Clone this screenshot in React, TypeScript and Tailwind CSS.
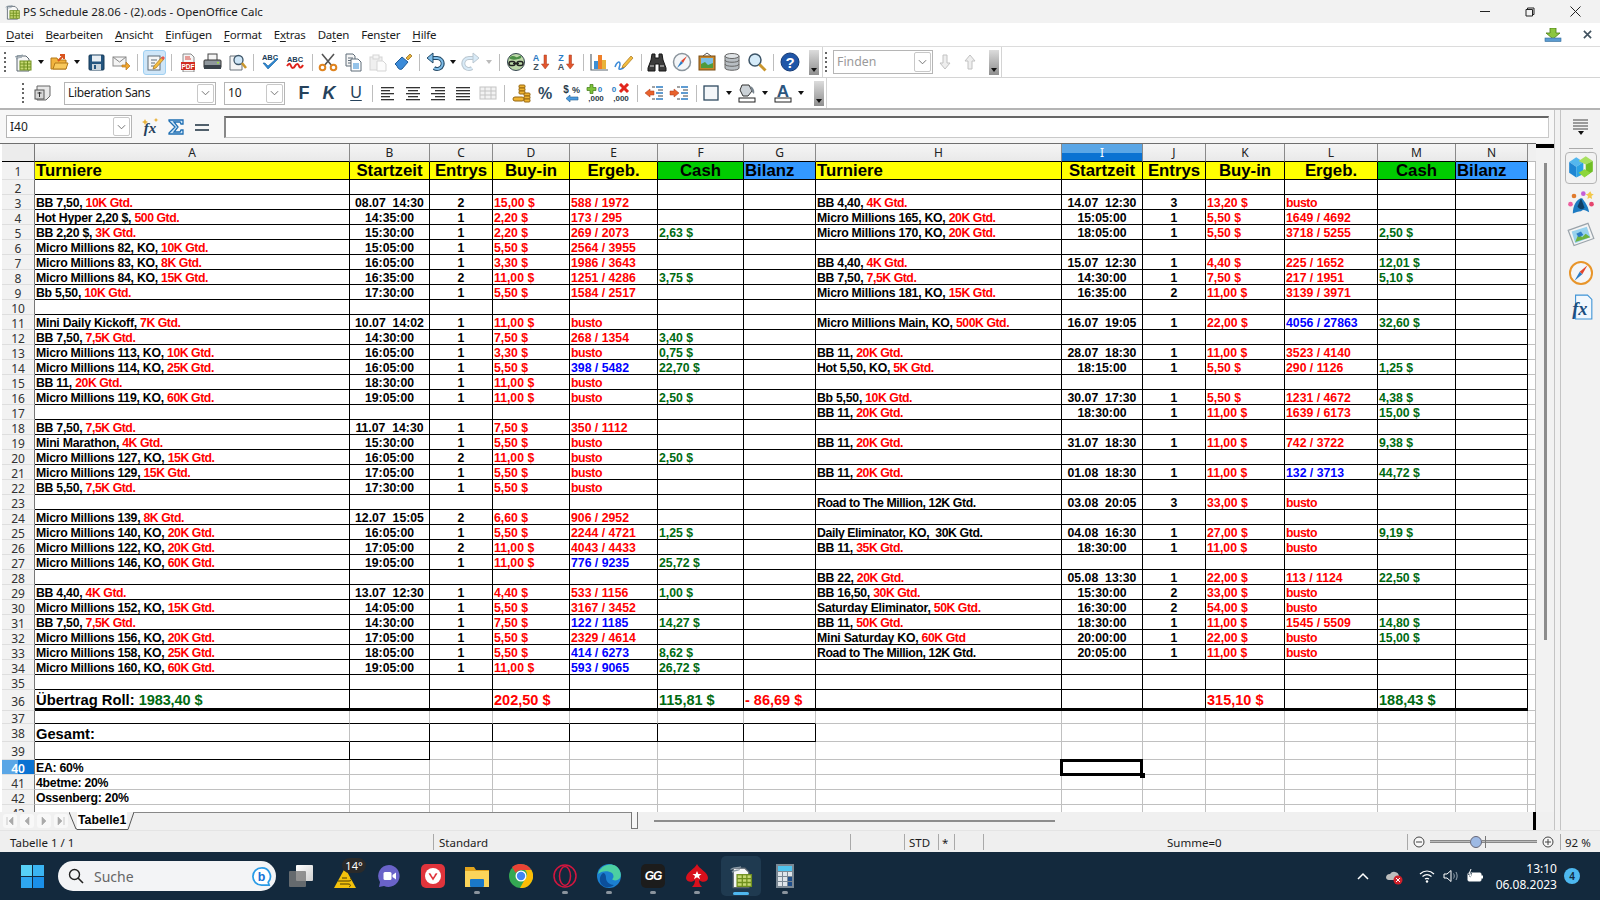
import React from "react";

type SP = { className?: string; children?: React.ReactNode };
const V = ({ className = "", children }: SP) => (
  <svg viewBox="0 0 20 20" className={`w-5 h-5 shrink-0 ${className}`}>{children}</svg>
);
const ff = "Liberation Sans, sans-serif";

const Dd = ({ m, gray }: { m: string; gray?: boolean }) => (
  <svg viewBox="0 0 6 4" className={`w-[6px] h-1 shrink-0 ${m}`}><path d="M0 0h6L3 4z" fill={gray ? "#bbb" : "#111"} /></svg>
);
const Sep = ({ m }: { m: string }) => <div className={`w-px h-[17px] bg-[#bdbdbd] shrink-0 ${m}`} />;
const Grip = ({ m }: { m: string }) => (
  <div className={`w-[2px] h-[20px] shrink-0 flex flex-col justify-between ${m}`}>
    {[0, 1, 2, 3, 4].map((i) => <div key={i} className="w-[2px] h-[2px] bg-[#666]" />)}
  </div>
);
const Overflow = ({ m }: { m: string }) => (
  <div className={`w-[10px] h-[25px] shrink-0 bg-gradient-to-b from-[#dcdcdc] to-[#8f8f8f] flex items-end justify-center pb-[3px] ${m}`}>
    <svg viewBox="0 0 6 4" className="w-[6px] h-1"><path d="M0 0h6L3 4z" fill="#111" /></svg>
  </div>
);
const Chev = () => (
  <svg viewBox="0 0 10 6" className="w-[9px] h-[6px]"><path d="M1 1l4 4 4-4" fill="none" stroke="#666" /></svg>
);
const Calc = ({ className = "" }: { className?: string }) => (
  <svg viewBox="0 0 20 20" className={className}>
    <path d="M4 4h9l3 3v12H4z" fill="#f7f7f7" stroke="#5b6670" />
    <rect x="7" y="9" width="11" height="9" fill="#c6d872" stroke="#6f8f1e" />
    <path d="M7 12h11M7 15h11M11 9v9M14.500 9v9" stroke="#6f8f1e" fill="none" />
    <path d="M2 5c3-2 5-1 8-2M3 7c3-2 4-1 6-2" stroke="#8a9aa5" fill="none" />
  </svg>
);
const IOpen = () => (
  <V className="ml-[5px]">
    <path d="M2 6h6l1 2h8v9H2z" fill="#f2b33d" stroke="#b37a1a" />
    <path d="M4 17l2-6h13l-2 6z" fill="#f8c95c" stroke="#b37a1a" />
    <path d="M9 9l6-6m-4 0h4v4" fill="none" stroke="#d9531e" strokeWidth="2" />
  </V>
);
const ISave = () => (
  <V className="ml-[6px]">
    <rect x="3" y="3" width="15" height="15" rx="1" fill="#24557f" stroke="#163a58" />
    <rect x="6" y="3.500" width="9" height="6" fill="#e8eef3" />
    <rect x="6" y="12" width="9" height="6" fill="#c9d4dc" />
    <rect x="8" y="13" width="2" height="4" fill="#24557f" />
  </V>
);
const IMail = () => (
  <V className="ml-[5px]">
    <rect x="2" y="5" width="13" height="9" fill="#f4f4f4" stroke="#8a8a8a" />
    <path d="M2 5l6.500 5L15 5" fill="none" stroke="#8a8a8a" />
    <path d="M11 13h4v-3l4 4-4 4v-3h-4z" fill="#efa52d" stroke="#b9751a" strokeWidth=".7" />
  </V>
);
const IEdit = () => (
  <div className="ml-[5px] w-[23px] h-[25px] shrink-0 flex items-center justify-center bg-[#cfe6f8] border border-[#9fd0f2] rounded-[3px]">
    <V>
      <rect x="3" y="4" width="12" height="14" fill="#f6f6f6" stroke="#5f6c78" />
      <path d="M6 8h6M6 11h4M6 14h3" stroke="#5f6c78" />
      <path d="M9 14l8-9 2 2-8 9-3 1z" fill="#f3bd3f" stroke="#a5731c" strokeWidth=".7" />
      <path d="M16 6l2-2 2 2-2 2z" fill="#e4574f" />
    </V>
  </div>
);
const IPdf = () => (
  <V className="ml-[6px]">
    <path d="M5 2h8l3 3v15H5z" fill="#f5f5f5" stroke="#8a8a8a" />
    <path d="M7 5h5M7 7h6" stroke="#d8453a" />
    <rect x="3" y="10" width="14" height="8" fill="#d02c23" />
    <text x="10" y="16.500" fontSize="6.500" fontWeight="700" fill="#fff" textAnchor="middle" fontFamily={ff}>PDF</text>
  </V>
);
const IPrint = () => (
  <V className="ml-[4px]">
    <rect x="6" y="2" width="9" height="7" fill="#f5f5f5" stroke="#444" />
    <rect x="2" y="8" width="17" height="8" rx="1" fill="#8f979d" stroke="#333" />
    <rect x="2" y="13" width="17" height="4" fill="#39424a" />
    <rect x="15" y="10" width="2" height="1.500" fill="#9adf3f" />
  </V>
);
const IPreview = () => (
  <V className="ml-[5px]">
    <path d="M3 4h9l3 3v11H3z" fill="#f5f5f5" stroke="#6a737b" />
    <circle cx="11.500" cy="8" r="4.500" fill="#cfe6f7" stroke="#3d5568" strokeWidth="1.300" />
    <path d="M15 11l4 5" stroke="#c9962d" strokeWidth="2.500" />
  </V>
);
const ISpell = () => (
  <V className="ml-[6px]">
    <text x="10" y="8" fontSize="7.500" fontWeight="700" fill="#24405a" textAnchor="middle" fontFamily={ff}>ABC</text>
    <path d="M3 11l5 6L18 7l-1-1-9 8-3-3z" fill="#2b87d3" stroke="#1a5f9c" strokeWidth=".6" />
  </V>
);
const IAuto = () => (
  <V className="ml-[5px]">
    <text x="10" y="10" fontSize="7.500" fontWeight="700" fill="#24405a" textAnchor="middle" fontFamily={ff}>ABC</text>
    <path d="M2 14c2-3 3-3 4 0s3 2 4 0 3-3 4 0 3 1 4-1" fill="none" stroke="#e0241b" strokeWidth="2" />
  </V>
);
const ICut = () => (
  <V className="ml-[5px]">
    <path d="M4 2l10 12M16 2L6 14" stroke="#555" strokeWidth="1.600" />
    <circle cx="4.500" cy="15.500" r="2.800" fill="none" stroke="#df8420" strokeWidth="2" />
    <circle cx="15.500" cy="15.500" r="2.800" fill="none" stroke="#df8420" strokeWidth="2" />
  </V>
);
const ICopy = () => (
  <V className="ml-[5px]">
    <path d="M3 2h7l2 2v10H3z" fill="#f5f5f5" stroke="#5f6c78" />
    <path d="M5 6h5M5 8.500h5M5 11h3" stroke="#5f6c78" />
    <path d="M8 7h7l3 3v9H8z" fill="#fff" stroke="#5f6c78" />
    <path d="M10 12h6M10 14h6M10 16h6" stroke="#2b87d3" />
  </V>
);
const IPaste = () => (
  <V className="ml-[5px] opacity-40">
    <rect x="2" y="5" width="12" height="13" fill="#d8d8d8" stroke="#999" />
    <rect x="5" y="3" width="6" height="4" fill="#e8e8e8" stroke="#999" />
    <path d="M9 9h6l3 3v7H9z" fill="#f8f8f8" stroke="#999" />
  </V>
);
const IBrush = () => (
  <V className="ml-[5px]">
    <path d="M13 6l4-4 2 2-4 4z" fill="#e9b23a" stroke="#8a6414" strokeWidth=".7" />
    <path d="M2 12l7-7 6 5-6 7c-2 1-3 0-4-1l-1-2z" fill="#3b8bd9" stroke="#1f5b97" />
  </V>
);
const IUndo = ({ gray, m }: { gray?: boolean; m: string }) => (
  <V className={`${m} ${gray ? "opacity-30 -scale-x-100" : ""}`}>
    <path d="M6 6h6a5.500 5.500 0 1 1-3 10" fill="none" stroke="#234a68" strokeWidth="4" />
    <path d="M6 6h6a5.500 5.500 0 1 1-3 10" fill="none" stroke="#7fbde8" strokeWidth="2" />
    <path d="M8 1L2 6l6 5z" fill="#7fbde8" stroke="#234a68" />
  </V>
);
const IGlobe = () => (
  <V className="ml-[6px]">
    <circle cx="10" cy="10" r="8.500" fill="#bcd8a8" stroke="#34454f" />
    <path d="M3 6c3-3 5-2 7-1s3-2 5-1c1 2-1 3-3 3-3 1-7 1-9-1z" fill="#4c8f46" />
    <rect x="3" y="9.500" width="6" height="4" rx="2" fill="none" stroke="#222" strokeWidth="1.500" />
    <rect x="11" y="9.500" width="6" height="4" rx="2" fill="none" stroke="#222" strokeWidth="1.500" />
    <path d="M7 11.500h6" stroke="#222" strokeWidth="1.500" />
  </V>
);
const ISort = ({ a, b }: { a: string; b: string }) => (
  <V className="ml-[5px]">
    <text x="5" y="9" fontSize="9" fontWeight="700" fill="#2b7cc4" textAnchor="middle" fontFamily={ff}>{a}</text>
    <text x="5" y="18" fontSize="9" fontWeight="700" fill="#44515c" textAnchor="middle" fontFamily={ff}>{b}</text>
    <path d="M13 3h2.500v9H18l-3.800 5-3.800-5H13z" fill="#e2552d" stroke="#a8381a" strokeWidth=".5" />
  </V>
);
const IChart = () => (
  <V className="ml-[5px]">
    <path d="M2 2v16h17" fill="none" stroke="#5a6670" strokeWidth="1.200" />
    <rect x="5" y="9" width="4" height="8" fill="#3d8fd6" />
    <rect x="9" y="3" width="4" height="14" fill="#ef7f28" />
    <rect x="13" y="8" width="4" height="9" fill="#e8b33a" />
  </V>
);
const IDraw = () => (
  <V className="ml-[5px]">
    <path d="M1 15c2-6 5-6 5-3s-3 6 1 5 3-3 5-5" fill="none" stroke="#3b8bd9" strokeWidth="1.500" />
    <path d="M9 13L17 4l2 2-8 9-3 1z" fill="#f3bd3f" stroke="#a5731c" strokeWidth=".7" />
  </V>
);
const IBinoc = () => (
  <V className="ml-[5px]">
    <path d="M5 2h3v4h4V2h3l1 6 3 8v3h-7v-7H8v7H1v-3l3-8z" fill="#3c3c3c" stroke="#151515" />
    <rect x="3" y="13" width="4" height="2" fill="#8a8a8a" />
    <rect x="13" y="13" width="4" height="2" fill="#8a8a8a" />
  </V>
);
const ICompass = ({ m, ring }: { m: string; ring: string }) => (
  <V className={m}>
    <circle cx="10" cy="10" r="8.500" fill="#f4f6f8" stroke={ring} strokeWidth="1.500" />
    <path d="M15 4l-6 5 2 2z" fill="#e2452d" />
    <path d="M5 16l4-7 2 2z" fill="#2b7cc4" />
  </V>
);
const IFrame = () => (
  <V className="ml-[5px]">
    <path d="M6 4l4-3 4 3" fill="none" stroke="#555" />
    <rect x="2" y="4" width="16" height="14" fill="#c8862a" stroke="#7b4c12" />
    <rect x="4" y="6" width="12" height="10" fill="#7cc0e8" />
    <path d="M4 16v-4l4-2 3 3 5-2v5z" fill="#4f9b3e" />
  </V>
);
const IDb = () => (
  <V className="ml-[5px]">
    <path d="M3 4v12c0 3 14 3 14 0V4" fill="#b8bec3" stroke="#666" />
    <ellipse cx="10" cy="4" rx="7" ry="2.500" fill="#dfe3e6" stroke="#666" />
    <path d="M3 8c0 3 14 3 14 0M3 12c0 3 14 3 14 0" fill="none" stroke="#666" />
  </V>
);
const IZoom = () => (
  <V className="ml-[5px]">
    <circle cx="8" cy="8" r="6" fill="#d5ebf9" stroke="#3d5568" strokeWidth="1.500" />
    <path d="M12.500 12.500l6 6" stroke="#c9962d" strokeWidth="3" />
  </V>
);
const IHelp = () => (
  <V className="ml-[6px]">
    <circle cx="10" cy="10" r="9" fill="#1f56a8" stroke="#143a75" />
    <text x="10" y="15.500" fontSize="15" fontWeight="700" fill="#fff" textAnchor="middle" fontFamily={ff}>?</text>
  </V>
);
const IStyles = () => (
  <V className="ml-[9px]">
    <path d="M4 3h13v10l-4 4H4z" fill="#e8e8e8" stroke="#666" />
    <rect x="2" y="7" width="9" height="9" fill="#d7d7d7" stroke="#555" />
    <path d="M6.500 9v5M4.500 10h4" stroke="#333" />
  </V>
);
const TxtBtn = ({ m, c, t }: { m: string; c: string; t: string }) => (
  <div className={`w-5 h-5 shrink-0 flex items-center justify-center font-['Liberation_Sans',sans-serif] text-[#26425c] ${c} ${m}`}>{t}</div>
);
const Align = ({ m, lines }: { m: string; lines: [number, number][] }) => (
  <V className={m}>
    {lines.map(([x, w], i) => <rect key={i} x={x} y={4 + i * 3} width={w} height="1.300" fill="#333" />)}
  </V>
);
const IMerge = () => (
  <V className="ml-[5px]">
    <rect x="2" y="4" width="16" height="12" fill="#f2f2f2" stroke="#c4c4c4" />
    <path d="M2 8h16M2 12h16M7 4v12M13 4v12" stroke="#c4c4c4" />
  </V>
);
const ICoins = () => (
  <V className="ml-[6px]">
    <rect x="8" y="2" width="6" height="3" rx="1" fill="#efb332" stroke="#96660f" />
    <rect x="8" y="5" width="6" height="3" rx="1" fill="#efb332" stroke="#96660f" />
    <rect x="8" y="8" width="6" height="3" rx="1" fill="#efb332" stroke="#96660f" />
    <rect x="13" y="10" width="6" height="3" rx="1" fill="#efb332" stroke="#96660f" />
    <rect x="13" y="13" width="6" height="3" rx="1" fill="#efb332" stroke="#96660f" />
    <rect x="13" y="16" width="6" height="3" rx="1" fill="#efb332" stroke="#96660f" />
    <rect x="2" y="14" width="11" height="4" rx="2" fill="#efb332" stroke="#96660f" />
  </V>
);
const IPct = () => (
  <V className="ml-[4px]">
    <text x="10" y="16" fontSize="16" fontWeight="700" fill="#2f4a60" textAnchor="middle" fontFamily={ff}>%</text>
  </V>
);
const IDollar = () => (
  <V className="ml-[6px]">
    <text x="5" y="10" fontSize="10" fontWeight="700" fill="#2a3b48" textAnchor="middle" fontFamily={ff}>$</text>
    <text x="15" y="10" fontSize="9" fontWeight="700" fill="#2a3b48" textAnchor="middle" fontFamily={ff}>%</text>
    <path d="M17 14H9v-2l-4 3.500L9 19v-2h8z" fill="#4c9be0" stroke="#24608f" strokeWidth=".6" />
  </V>
);
const INum = ({ add }: { add?: boolean }) => (
  <V className="ml-[5px]">
    {add ? <path d="M4 1.500h3v3h3v3H7v3H4v-3H1v-3h3z" fill="#7cc23a" stroke="#3f7a14" strokeWidth=".7" /> : <path d="M9 1l8 8m0-8l-8 8" stroke="#e2261d" strokeWidth="3" />}
    <text x={add ? "14" : "3"} y="9" fontSize="8" fontWeight="700" fill="#2b7cc4" textAnchor="middle" fontFamily={ff}>0</text>
    <text x="10" y="18" fontSize="8" fontWeight="700" fill="#2a3b48" textAnchor="middle" fontFamily={ff}>,000</text>
  </V>
);
const IIndent = ({ out }: { out?: boolean }) => (
  <V className={out ? "ml-[6px]" : "ml-[5px]"}>
    {out ? <path d="M1 10l5-4v2h4v4H6v2z" fill="#e8622c" stroke="#a8381a" strokeWidth=".5" /> : <path d="M10 10L5 6v2H1v4h4v2z" fill="#e8622c" stroke="#a8381a" strokeWidth=".5" />}
    <path d="M12 4h7M12 10h7M12 16h7" stroke="#2b7cc4" strokeWidth="1.500" />
    <path d="M8 4h3M8 16h3M14 7h5M14 13h5" stroke="#444" />
  </V>
);
const IBorder = () => (
  <V className="ml-[4px]">
    <rect x="3" y="3" width="14" height="14" fill="#f3f6f9" stroke="#2f4a60" strokeWidth="1.300" />
  </V>
);
const IFill = () => (
  <V className="ml-[5px]">
    <path d="M5 2l7 0 3 6-4 5H6L3 7z" fill="#ccd2d7" stroke="#333" />
    <path d="M13 3c3 1 5 4 4 8l-2-2z" fill="#7a868f" />
    <rect x="2" y="15" width="16" height="4" fill="#fff" stroke="#222" />
  </V>
);
const IFontColor = () => (
  <V className="ml-[5px]">
    <text x="10" y="13.500" fontSize="17" fontWeight="700" fill="#2b567f" textAnchor="middle" fontFamily={ff}>A</text>
    <rect x="2" y="15" width="16" height="4" fill="#fff" stroke="#222" />
  </V>
);
const IArrow = ({ up, m }: { up?: boolean; m: string }) => (
  <svg viewBox="0 0 16 16" className={`w-4 h-4 shrink-0 ${m} ${up ? "rotate-180" : ""}`}>
    <path d="M6 1h4v8h3l-5 6-5-6h3z" fill="#eee" stroke="#c2c2c2" />
  </svg>
);

const MenuItem = ({ a, u, b }: { a: string; u: string; b: string }) => (
  <span>{a}<span className="underline underline-offset-[2px]">{u}</span>{b}</span>
);

type R = [string, string, string, string, string, string, string];
const E: R = ["", "", "", "", "", "", ""];
const MM = "Micro Millions ";
const left: R[] = [
  ["BB 7,50, ", "10K Gtd.", "08.07  14:30", "2", "15,00 $", "588 / 1972", ""],
  ["Hot Hyper 2,20 $, ", "500 Gtd.", "14:35:00", "1", "2,20 $", "173 / 295", ""],
  ["BB 2,20 $, ", "3K Gtd.", "15:30:00", "1", "2,20 $", "269 / 2073", "2,63 $"],
  [MM + "82, KO, ", "10K Gtd.", "15:05:00", "1", "5,50 $", "2564 / 3955", ""],
  [MM + "83, KO, ", "8K Gtd.", "16:05:00", "1", "3,30 $", "1986 / 3643", ""],
  [MM + "84, KO, ", "15K Gtd.", "16:35:00", "2", "11,00 $", "1251 / 4286", "3,75 $"],
  ["Bb 5,50, ", "10K Gtd.", "17:30:00", "1", "5,50 $", "1584 / 2517", ""],
  E,
  ["Mini Daily Kickoff, ", "7K Gtd.", "10.07  14:02", "1", "11,00 $", "busto", ""],
  ["BB 7,50, ", "7,5K Gtd.", "14:30:00", "1", "7,50 $", "268 / 1354", "3,40 $"],
  [MM + "113, KO, ", "10K Gtd.", "16:05:00", "1", "3,30 $", "busto", "0,75 $"],
  [MM + "114, KO, ", "25K Gtd.", "16:05:00", "1", "5,50 $", "!398 / 5482", "22,70 $"],
  ["BB 11, ", "20K Gtd.", "18:30:00", "1", "11,00 $", "busto", ""],
  [MM + "119, KO, ", "60K Gtd.", "19:05:00", "1", "11,00 $", "busto", "2,50 $"],
  E,
  ["BB 7,50, ", "7,5K Gtd.", "11.07  14:30", "1", "7,50 $", "350 / 1112", ""],
  ["Mini Marathon, ", "4K Gtd.", "15:30:00", "1", "5,50 $", "busto", ""],
  [MM + "127, KO, ", "15K Gtd.", "16:05:00", "2", "11,00 $", "busto", "2,50 $"],
  [MM + "129, ", "15K Gtd.", "17:05:00", "1", "5,50 $", "busto", ""],
  ["BB 5,50, ", "7,5K Gtd.", "17:30:00", "1", "5,50 $", "busto", ""],
  E,
  [MM + "139, ", "8K Gtd.", "12.07  15:05", "2", "6,60 $", "906 / 2952", ""],
  [MM + "140, KO, ", "20K Gtd.", "16:05:00", "1", "5,50 $", "2244 / 4721", "1,25 $"],
  [MM + "122, KO, ", "20K Gtd.", "17:05:00", "2", "11,00 $", "4043 / 4433", ""],
  [MM + "146, KO, ", "60K Gtd.", "19:05:00", "1", "11,00 $", "!776 / 9235", "25,72 $"],
  E,
  ["BB 4,40, ", "4K Gtd.", "13.07  12:30", "1", "4,40 $", "533 / 1156", "1,00 $"],
  [MM + "152, KO, ", "15K Gtd.", "14:05:00", "1", "5,50 $", "3167 / 3452", ""],
  ["BB 7,50, ", "7,5K Gtd.", "14:30:00", "1", "7,50 $", "!122 / 1185", "14,27 $"],
  [MM + "156, KO, ", "20K Gtd.", "17:05:00", "1", "5,50 $", "2329 / 4614", ""],
  [MM + "158, KO, ", "25K Gtd.", "18:05:00", "1", "5,50 $", "!414 / 6273", "8,62 $"],
  [MM + "160, KO, ", "60K Gtd.", "19:05:00", "1", "11,00 $", "!593 / 9065", "26,72 $"],
];
const right: R[] = [
  ["BB 4,40, ", "4K Gtd.", "14.07  12:30", "3", "13,20 $", "busto", ""],
  [MM + "165, KO, ", "20K Gtd.", "15:05:00", "1", "5,50 $", "1649 / 4692", ""],
  [MM + "170, KO, ", "20K Gtd.", "18:05:00", "1", "5,50 $", "3718 / 5255", "2,50 $"],
  E,
  ["BB 4,40, ", "4K Gtd.", "15.07  12:30", "1", "4,40 $", "225 / 1652", "12,01 $"],
  ["BB 7,50, ", "7,5K Gtd.", "14:30:00", "1", "7,50 $", "217 / 1951", "5,10 $"],
  [MM + "181, KO, ", "15K Gtd.", "16:35:00", "2", "11,00 $", "3139 / 3971", ""],
  E,
  ["Micro Millions Main, KO, ", "500K Gtd.", "16.07  19:05", "1", "22,00 $", "!4056 / 27863", "32,60 $"],
  E,
  ["BB 11, ", "20K Gtd.", "28.07  18:30", "1", "11,00 $", "3523 / 4140", ""],
  ["Hot 5,50, KO, ", "5K Gtd.", "18:15:00", "1", "5,50 $", "290 / 1126", "1,25 $"],
  E,
  ["Bb 5,50, ", "10K Gtd.", "30.07  17:30", "1", "5,50 $", "1231 / 4672", "4,38 $"],
  ["BB 11, ", "20K Gtd.", "18:30:00", "1", "11,00 $", "1639 / 6173", "15,00 $"],
  E,
  ["BB 11, ", "20K Gtd.", "31.07  18:30", "1", "11,00 $", "742 / 3722", "9,38 $"],
  E,
  ["BB 11, ", "20K Gtd.", "01.08  18:30", "1", "11,00 $", "!132 / 3713", "44,72 $"],
  E,
  ["Road to The Million, 12K Gtd.", "", "03.08  20:05", "3", "33,00 $", "busto", ""],
  E,
  ["Daily Eliminator, KO,  30K Gtd.", "", "04.08  16:30", "1", "27,00 $", "busto", "9,19 $"],
  ["BB 11, ", "35K Gtd.", "18:30:00", "1", "11,00 $", "busto", ""],
  E,
  ["BB 22, ", "20K Gtd.", "05.08  13:30", "1", "22,00 $", "113 / 1124", "22,50 $"],
  ["BB 16,50, ", "30K Gtd.", "15:30:00", "2", "33,00 $", "busto", ""],
  ["Saturday Eliminator, ", "50K Gtd.", "16:30:00", "2", "54,00 $", "busto", ""],
  ["BB 11, ", "50K Gtd.", "18:30:00", "1", "11,00 $", "1545 / 5509", "14,80 $"],
  ["Mini Saturday KO, ", "60K Gtd", "20:00:00", "1", "22,00 $", "busto", "15,00 $"],
  ["Road to The Million, 12K Gtd.", "", "20:05:00", "1", "11,00 $", "busto", ""],
  E,
];

const RED = "text-[#ff0000]";
const GREEN = "text-[#006b12]";
const BLUE = "text-[#0000ff]";
const COLS = ["A", "B", "C", "D", "E", "F", "G", "H", "I", "J", "K", "L", "M", "N"];

const borderFor = (r: number, i: number) => {
  let right = "border-r-[#c0c0c0]";
  let bottom = "border-b-[#c0c0c0]";
  if (i < 14 && r <= 36) {
    right = "border-r-black";
    bottom = "border-b-black";
  }
  if (r === 37 && i <= 6) bottom = "border-b-black";
  if (r === 38) {
    if (i >= 1 && i <= 6) right = "border-r-black";
    if (i <= 6) bottom = "border-b-black";
  }
  if (r === 39 && i <= 1) {
    right = "border-r-black";
    bottom = "border-b-black";
  }
  return `${right} ${bottom}`;
};
const heightFor = (r: number) => {
  if (r === 1) return "h-[18px]";
  if (r === 36) return "h-[21px]";
  if (r === 37) return "h-[13px]";
  if (r === 38 || r === 39) return "h-[18px]";
  return "h-[15px]";
};

const Cell = ({ r, i, className = "", children }: { r: number; i: number; className?: string; children?: React.ReactNode }) => (
  <div className={`relative flex items-center whitespace-pre overflow-visible border-r ${r === 36 && i < 14 ? "border-b-[3px]" : "border-b"} ${borderFor(r, i)} ${heightFor(r)} ${className}`}>
    {children}
  </div>
);

const Result = ({ v }: { v: string }) =>
  v[0] === "!" ? <span className={BLUE}>{v.slice(1)}</span> : <span className={`${RED} ${v === "busto" ? "tracking-[-0.5px]" : ""}`}>{v}</span>;

const dataCells = (r: number, row: R, start: number) => {
  const [a, red, t, n, buy, res, cash] = row;
  return [
    <Cell key={start} r={r} i={start} className="pl-[1px] pt-[3px]">
      <span className={red ? "tracking-[-0.25px]" : "tracking-[-0.4px]"}>{a}</span>
      <span className={`${RED} tracking-[-0.45px]`}>{red}</span>
    </Cell>,
    <Cell key={start + 1} r={r} i={start + 1} className="justify-center pt-[3px]">{t}</Cell>,
    <Cell key={start + 2} r={r} i={start + 2} className="justify-center pt-[3px]">{n}</Cell>,
    <Cell key={start + 3} r={r} i={start + 3} className={`pl-[1px] pt-[3px] ${RED}`}>{buy}</Cell>,
    <Cell key={start + 4} r={r} i={start + 4} className="pl-[1px] pt-[3px]"><Result v={res} /></Cell>,
    <Cell key={start + 5} r={r} i={start + 5} className={`pl-[1px] pt-[3px] ${GREEN}`}>{cash}</Cell>,
  ];
};

const HeaderCell = ({ i, t, bg, left: l }: { i: number; t: string; bg: string; left?: boolean }) => (
  <Cell r={1} i={i} className={`${bg} text-[16.800px] pt-[2px] ${l ? "pl-[1px]" : "justify-center"}`}>{t}</Cell>
);

const RowHead = ({ n }: { n: number }) => (
  <div className={`flex items-center justify-center border-r border-r-[#777] border-b border-b-[#dedede] text-[12px] pt-[3px] font-['Noto_Sans',sans-serif] font-normal ${heightFor(n)} ${n === 40 ? "bg-gradient-to-r from-[#5aa6e6] from-50% to-[#0a72d2] to-50% text-white font-semibold" : "bg-[#f2f2f2] text-[#333]"}`}>
    {n}
  </div>
);

function Sheet() {
  const rows: React.ReactNode[] = [];
  rows.push(
    <React.Fragment key="h">
      <div className="h-[18px] bg-[#ececec] border-r border-r-[#777] border-b border-b-black" />
      {COLS.map((c) => (
        <div key={c} className={`h-[18px] flex items-center justify-center border-b border-b-black border-r border-r-[#8a8a8a] text-[12px] font-['Noto_Sans',sans-serif] font-normal ${c === "I" ? "bg-gradient-to-b from-[#5aa6e6] from-50% to-[#0a72d2] to-50% text-white" : "bg-gradient-to-b from-[#f5f5f5] to-[#e9e9e9] text-[#222]"}`}>{c}</div>
      ))}
      <div className="h-[18px] bg-[#f0f0f0] border-b border-b-[#bbb]" />
    </React.Fragment>
  );
  rows.push(
    <React.Fragment key="r1">
      <RowHead n={1} />
      <HeaderCell i={0} t="Turniere" bg="bg-[#ffff00]" left />
      <HeaderCell i={1} t="Startzeit" bg="bg-[#ffff00]" />
      <HeaderCell i={2} t="Entrys" bg="bg-[#ffff00]" />
      <HeaderCell i={3} t="Buy-in" bg="bg-[#ffff00]" />
      <HeaderCell i={4} t="Ergeb." bg="bg-[#ffff00]" />
      <HeaderCell i={5} t="Cash" bg="bg-[#00cc00]" />
      <HeaderCell i={6} t="Bilanz" bg="bg-[#3399ff]" left />
      <HeaderCell i={7} t="Turniere" bg="bg-[#ffff00]" left />
      <HeaderCell i={8} t="Startzeit" bg="bg-[#ffff00]" />
      <HeaderCell i={9} t="Entrys" bg="bg-[#ffff00]" />
      <HeaderCell i={10} t="Buy-in" bg="bg-[#ffff00]" />
      <HeaderCell i={11} t="Ergeb." bg="bg-[#ffff00]" />
      <HeaderCell i={12} t="Cash" bg="bg-[#00cc00]" />
      <HeaderCell i={13} t="Bilanz" bg="bg-[#3399ff]" left />
      <Cell r={1} i={14} />
    </React.Fragment>
  );
  for (let r = 2; r <= 43; r++) {
    const cells: React.ReactNode[] = [];
    if (r >= 3 && r <= 34) {
      cells.push(...dataCells(r, left[r - 3], 0));
      cells.push(<Cell key="g" r={r} i={6} />);
      cells.push(...dataCells(r, right[r - 3], 7));
      cells.push(<Cell key="n" r={r} i={13} />);
    } else if (r === 36) {
      const big = "text-[14.500px] pl-[1px] pt-[2px]";
      const vals: React.ReactNode[] = [
        <><span className="text-[14.800px]">Übertrag Roll: </span><span className={`${GREEN} tracking-[-0.1px]`}>1983,40 $</span></>,
        "", "", <span className={RED}>202,50 $</span>, "", <span className={GREEN}>115,81 $</span>, <span className={RED}>- 86,69 $</span>,
        "", "", "", <span className={RED}>315,10 $</span>, "", <span className={GREEN}>188,43 $</span>, "",
      ];
      vals.forEach((v, i) => cells.push(<Cell key={i} r={r} i={i} className={big}>{v}</Cell>));
    } else {
      COLS.forEach((c, i) => {
        let content: React.ReactNode = null;
        let cn = "pl-[1px] pt-[3px] tracking-[-0.25px]";
        if (i === 0 && r === 38) { content = "Gesamt:"; cn = "pl-[1px] pt-[3px] text-[14.700px]"; }
        if (i === 0 && r === 40) content = "EA: 60%";
        if (i === 0 && r === 41) content = "4betme: 20%";
        if (i === 0 && r === 42) content = "Ossenberg: 20%";
        cells.push(
          <Cell key={c} r={r} i={i} className={cn}>
            {content}
            {c === "I" && r === 40 && (
              <>
                <div className="absolute -left-[2px] -top-[1px] -right-[1px] -bottom-[2px] border-[3px] border-black z-10" />
                <div className="absolute -right-[3px] -bottom-[4px] w-[5px] h-[5px] bg-black z-10" />
              </>
            )}
          </Cell>
        );
      });
    }
    rows.push(
      <React.Fragment key={r}>
        <RowHead n={r} />
        {cells}
        <Cell r={r} i={14} />
      </React.Fragment>
    );
  }
  return (
    <div className="flex-1 h-[669px] pl-[2px] border-t border-t-[#6f6f6f] overflow-hidden bg-white">
      <div className="grid grid-cols-[33px_315px_80px_63px_77px_88px_86px_72px_246px_81px_63px_79px_93px_78px_72px_8px] font-['Liberation_Sans',sans-serif] font-bold text-[12.270px] leading-none text-black">
        {rows}
      </div>
    </div>
  );
}

const Slot = ({ children, dot }: { children?: React.ReactNode; dot?: boolean }) => (
  <div className="relative w-[44px] h-[48px] shrink-0 flex items-center justify-center">
    {children}
    {dot && <div className="absolute bottom-[6px] left-[19px] w-[6px] h-[3px] rounded-full bg-[#8a949e]" />}
  </div>
);

export default function App() {
  return (
    <div className="w-[1600px] h-[900px] flex flex-col overflow-hidden bg-white font-['Noto_Sans',sans-serif] text-[12px] text-[#1c1c1c]">
      {/* Title bar */}
      <div className="h-[23px] shrink-0 bg-[#f2f2f2] flex items-center">
        <Calc className="w-[17px] h-[17px] ml-[4px] shrink-0" />
        <span className="ml-[2px] text-[11.500px]">PS Schedule 28.06 - (2).ods - OpenOffice Calc</span>
        <svg viewBox="0 0 10 2" className="w-[10px] h-[2px] ml-auto"><rect width="10" height="1" fill="#222" /></svg>
        <svg viewBox="0 0 10 10" className="w-[10px] h-[10px] ml-[35px]"><path d="M2.500 2.500V1h6.500v6.500H7.500M1 2.500h6.500V9H1z" fill="none" stroke="#222" /></svg>
        <svg viewBox="0 0 11 11" className="w-[11px] h-[11px] ml-[35px] mr-[19px]"><path d="M.5.500l10 10M10.500.500l-10 10" stroke="#222" /></svg>
      </div>
      {/* Menu */}
      <div className="h-[24px] shrink-0 flex items-center pl-[6px] gap-[12px] border-b border-b-[#dcdcdc] text-[11.500px] tracking-[-0.2px]">
        <MenuItem a="" u="D" b="atei" />
        <MenuItem a="" u="B" b="earbeiten" />
        <MenuItem a="" u="A" b="nsicht" />
        <MenuItem a="" u="E" b="infügen" />
        <MenuItem a="" u="F" b="ormat" />
        <MenuItem a="E" u="x" b="tras" />
        <MenuItem a="Da" u="t" b="en" />
        <MenuItem a="Fen" u="s" b="ter" />
        <MenuItem a="" u="H" b="ilfe" />
        <svg viewBox="0 0 18 14" className="w-[18px] h-[14px] ml-auto"><path d="M6 0h6v5h4l-7 6-7-6h4z" fill="#8cc63f" stroke="#4a7c14" strokeWidth=".8" /><rect x="1" y="10" width="16" height="3.500" fill="#5a9bd0" stroke="#2f6a9a" strokeWidth=".6" /></svg>
        <svg viewBox="0 0 10 10" className="w-[9px] h-[9px] ml-[9px] mr-[8px]"><path d="M1 1l8 8M9 1l-8 8" stroke="#41525f" strokeWidth="1.800" /></svg>
      </div>
      {/* Toolbar 1 */}
      <div className="h-[31px] shrink-0 flex items-center border-b border-b-[#d4d4d4]">
        <Grip m="ml-[4px]" />
        <Calc className="w-5 h-5 shrink-0 ml-[7px]" />
        <Dd m="ml-[5px]" />
        <IOpen />
        <Dd m="ml-[5px]" />
        <ISave />
        <IMail />
        <Sep m="ml-[6px]" />
        <IEdit />
        <Sep m="ml-[5px]" />
        <IPdf />
        <IPrint />
        <IPreview />
        <Sep m="ml-[6px]" />
        <ISpell />
        <IAuto />
        <Sep m="ml-[7px]" />
        <ICut />
        <ICopy />
        <IPaste />
        <IBrush />
        <Sep m="ml-[6px]" />
        <IUndo m="ml-[5px]" />
        <Dd m="ml-[5px]" />
        <IUndo m="ml-[5px]" gray />
        <Dd m="ml-[5px]" gray />
        <Sep m="ml-[7px]" />
        <IGlobe />
        <ISort a="A" b="Z" />
        <ISort a="Z" b="A" />
        <Sep m="ml-[7px]" />
        <IChart />
        <IDraw />
        <Sep m="ml-[7px]" />
        <IBinoc />
        <ICompass m="ml-[5px]" ring="#8a949c" />
        <IFrame />
        <IDb />
        <IZoom />
        <Sep m="ml-[6px]" />
        <IHelp />
        <Overflow m="ml-[9px]" />
        <div className="w-px h-full bg-[#d4d4d4] ml-[3px]" />
        <Grip m="ml-[2px]" />
        <div className="ml-[6px] w-[100px] h-[24px] border border-[#b5b5b5] flex items-center pl-[3px] text-[#9a9a9a] text-[12.300px]">
          <span>Finden</span>
          <div className="ml-auto mr-px w-[17px] h-[20px] border border-[#c8c8c8] rounded-[2px] flex items-center justify-center"><Chev /></div>
        </div>
        <IArrow m="ml-[4px]" />
        <IArrow m="ml-[9px]" up />
        <Overflow m="ml-[11px]" />
        <div className="w-px h-full bg-[#d4d4d4] ml-[2px]" />
      </div>
      {/* Toolbar 2 */}
      <div className="h-[32px] shrink-0 flex items-center border-b-2 border-b-[#b4b4b4]">
        <Grip m="ml-[22px]" />
        <IStyles />
        <div className="ml-[11px] w-[152px] h-[23px] border border-[#b5b5b5] flex items-center pl-[3px] text-[12px] tracking-[-0.3px]">
          <span>Liberation Sans</span>
          <div className="ml-auto mr-px w-[17px] h-[19px] border border-[#c8c8c8] rounded-[2px] flex items-center justify-center"><Chev /></div>
        </div>
        <div className="ml-[8px] w-[61px] h-[23px] border border-[#b5b5b5] flex items-center pl-[3px] text-[12px]">
          <span>10</span>
          <div className="ml-auto mr-px w-[17px] h-[19px] border border-[#c8c8c8] rounded-[2px] flex items-center justify-center"><Chev /></div>
        </div>
        <TxtBtn m="ml-[9px]" c="font-bold text-[18px]" t="F" />
        <TxtBtn m="ml-[5px]" c="font-bold italic text-[18px]" t="K" />
        <TxtBtn m="ml-[7px]" c="underline underline-offset-[2px] text-[16px]" t="U" />
        <Sep m="ml-[6px]" />
        <Align m="ml-[5px]" lines={[[3, 13], [3, 9], [3, 13], [3, 9], [3, 13]]} />
        <Align m="ml-[5px]" lines={[[3, 14], [5, 10], [3, 14], [5, 10], [3, 14]]} />
        <Align m="ml-[5px]" lines={[[3, 14], [7, 10], [3, 14], [7, 10], [3, 14]]} />
        <Align m="ml-[5px]" lines={[[3, 14], [3, 14], [3, 14], [3, 14], [3, 14]]} />
        <IMerge />
        <Sep m="ml-[6px]" />
        <ICoins />
        <IPct />
        <IDollar />
        <INum add />
        <INum />
        <Sep m="ml-[6px]" />
        <IIndent out />
        <IIndent />
        <Sep m="ml-[7px]" />
        <IBorder />
        <Dd m="ml-[5px]" />
        <IFill />
        <Dd m="ml-[5px]" />
        <IFontColor />
        <Dd m="ml-[5px]" />
        <Overflow m="ml-[10px]" />
        <div className="w-px h-full bg-[#d4d4d4] ml-[2px]" />
      </div>
      {/* Main */}
      <div className="h-[720px] shrink-0 flex bg-[#f2f2f2]">
        <div className="w-[1555px] shrink-0 flex flex-col border-r border-r-[#c4c4c4]">
          {/* Formula bar */}
          <div className="h-[33px] shrink-0 flex items-center bg-[#f7f7f7]">
            <div className="ml-[6px] w-[126px] h-[23px] bg-white border border-[#b5b5b5] flex items-center pl-[3px] text-[12px]">
              <span>I40</span>
              <div className="ml-auto mr-px w-[17px] h-[19px] border border-[#c8c8c8] rounded-[2px] flex items-center justify-center"><Chev /></div>
            </div>
            <svg viewBox="0 0 20 20" className="w-5 h-5 ml-[9px] shrink-0">
              <text x="9" y="16" fontSize="15" fontStyle="italic" fontWeight="700" fill="#24405a" textAnchor="middle" fontFamily="Liberation Serif, serif">fx</text>
              <path d="M4 2l1 2 2 1-2 1-1 2-1-2-2-1 2-1zM15 1l1 1.500 1.500.5-1.500.5L15 5l-1-1.500L12.500 3 14 2.500z" fill="#e9b23a" />
            </svg>
            <svg viewBox="0 0 20 20" className="w-5 h-5 ml-[5px] shrink-0">
              <path d="M3 3h14v4h-2l-1-2H8l4 5-4 5h6l1-2h2v4H3v-1l6-6-6-6z" fill="#cfe6f8" stroke="#1f6fb3" strokeWidth="1.300" />
            </svg>
            <svg viewBox="0 0 20 20" className="w-5 h-5 ml-[6px] shrink-0"><path d="M3 7h14v2H3zM3 12h14v2H3z" fill="#51606c" /></svg>
            <div className="ml-[12px] w-[1325px] h-[22px] bg-white border border-[#c9c9c9] border-t-2 border-l-2 border-t-[#666] border-l-[#888]" />
          </div>
          {/* Grid */}
          <div className="flex">
            <div className="w-[1536px] shrink-0"><Sheet /></div>
            <div className="flex-1 flex flex-col items-center">
              <div className="w-full h-[4px] bg-black mt-[1px]" />
              <div className="w-[3px] h-[477px] bg-[#8c8c8c] mt-[15px]" />
            </div>
          </div>
          {/* Tabs */}
          <div className="h-[18px] shrink-0 flex items-center bg-[#f0f0f0]">
            <div className="ml-[3px] flex gap-[3px]">
              {["M3 2v8M9 2L5 6l4 4z", "M8 2L4 6l4 4z", "M4 2l4 4-4 4z", "M9 2v8M3 2l4 4-4 4z"].map((d, i) => (
                <div key={i} className="w-[14px] h-[14px] bg-[#f8f8f8] rounded-[3px] flex items-center justify-center">
                  <svg viewBox="0 0 12 12" className="w-3 h-3"><path d={d} fill="#aaa" stroke="#aaa" strokeWidth=".6" /></svg>
                </div>
              ))}
            </div>
            <svg viewBox="0 0 8 18" className="w-2 h-[18px] ml-[1px] shrink-0"><path d="M0 0l7 17h1" fill="none" stroke="#555" /></svg>
            <div className="h-[18px] w-[50px] shrink-0 flex items-center bg-white border-b border-b-[#555] font-['Liberation_Sans',sans-serif] font-bold text-[12.300px] text-black pl-px">Tabelle1</div>
            <svg viewBox="0 0 7 18" className="w-[7px] h-[18px] shrink-0"><path d="M0 17.500h1L7 0" fill="#fff" stroke="#555" /></svg>
            <div className="h-full flex-1 border-t border-t-[#888]" />
            <div className="w-[7px] h-[17px] shrink-0 bg-[#f6f6f6] border-x border-b border-[#777] mb-px" />
            <div className="w-[16px] shrink-0" />
            <div className="w-[401px] h-[2px] bg-[#8c8c8c] shrink-0" />
            <div className="w-[478px] shrink-0" />
            <div className="w-[3px] h-full bg-black shrink-0" />
            <div className="w-[18px] shrink-0" />
          </div>
        </div>
        {/* Sidebar */}
        <div className="flex-1 flex">
          <div className="w-[5px] shrink-0" />
          <div className="flex-1 bg-[#f2f2f2] border-l border-l-[#c4c4c4] flex flex-col items-center">
            <svg viewBox="0 0 18 18" className="w-[18px] h-[18px] mt-[8px] shrink-0"><path d="M1 2h15M1 5h15M1 8h15M1 11h15" stroke="#444" strokeWidth="1.200" /><path d="M6 13h6l-3 4z" fill="#111" /></svg>
            <div className="w-[24px] h-px bg-[#aaa] mt-[12px]" />
            <div className="mt-[3px] w-[32px] h-[32px] border border-[#b5b5b5] rounded-[4px] flex items-center justify-center">
              <svg viewBox="0 0 22 22" className="w-[26px] h-[26px]">
                <path d="M1 6l6-4 6 4-6 4z" fill="#53b7ee" />
                <path d="M1 6v9l6 4v-9z" fill="#1e86d3" />
                <path d="M13 6l-6 4v9l6-3z" fill="#2ba2e4" />
                <path d="M9 5l6-4 6 4-6 3z" fill="#a8e05f" />
                <path d="M21 5v9l-6 4V8z" fill="#6fbf24" />
                <path d="M9 15l5-3 5 3-5 4z" fill="#8dd63c" />
              </svg>
            </div>
            <svg viewBox="0 0 24 24" className="w-[28px] h-[28px] mt-[5px] shrink-0">
              <path d="M5 21c0-6 3-13 8-13 2 3 5 6 6 12-3-2-5-3-7-1-2 0-5 1-7 2z" fill="#1d7bc2" />
              <path d="M12 8l3 8c-2 2-4 2-6-1z" fill="#123f63" />
              <circle cx="6" cy="6" r="2" fill="#e07a2c" />
              <circle cx="14" cy="4" r="2" fill="#c45fd6" />
              <path d="M20 2l1 2 2 .500-2 1.500.500 2.500-2-1-2 1 .500-2.500-2-1.500 2-.500z" fill="#f2c84b" />
              <circle cx="3" cy="13" r="2" fill="#ed5fa0" />
              <circle cx="21" cy="13" r="2" fill="#e5466e" />
            </svg>
            <svg viewBox="0 0 24 24" className="w-[28px] h-[28px] mt-[4px] shrink-0">
              <path d="M1 8l17-6 5 13-17 6z" fill="#f4f4f4" stroke="#9aa3aa" />
              <path d="M4 9l13-4 3 9-13 5z" fill="#98d2ee" />
              <path d="M7 18l3-7 3 3 3-3 4 3z" fill="#6db33f" />
              <path d="M8 11l4-2 2 3-4 2z" fill="#2b7cc4" />
            </svg>
            <div className="mt-[11px] shrink-0"><ICompass m="!w-[26px] !h-[26px]" ring="#e8952a" /></div>
            <svg viewBox="0 0 24 24" className="w-[26px] h-[26px] mt-[8px] shrink-0">
              <path d="M7 1h11l4 4v18H7z" fill="#f2f8fd" stroke="#3e93d6" />
              <text x="11" y="19" fontSize="17" fontStyle="italic" fontWeight="700" fill="#1c4f80" textAnchor="middle" fontFamily="Liberation Serif, serif">fx</text>
            </svg>
          </div>
        </div>
      </div>
      {/* Status */}
      <div className="h-[22px] shrink-0 flex items-center bg-[#efefef] text-[11.500px] border-t border-t-[#e4e4e4]">
        <div className="w-[434px] h-[16px] pl-[10px] pt-[2px] border-r border-r-[#a9a9a9] flex items-center">Tabelle 1 / 1</div>
        <div className="w-[417px] h-[16px] pl-[5px] pt-[2px] border-r border-r-[#a9a9a9] flex items-center">Standard</div>
        <div className="w-[54px] h-[16px] border-r border-r-[#a9a9a9]" />
        <div className="w-[34px] h-[16px] pl-[4px] pt-[2px] border-r border-r-[#a9a9a9] flex items-center">STD</div>
        <div className="w-[16px] h-[16px] pl-[3px] pt-[2px] border-r border-r-[#a9a9a9] flex items-center">*</div>
        <div className="w-[29px] h-[16px] border-r border-r-[#a9a9a9]" />
        <div className="w-[424px] h-[16px] pl-[183px] pt-[2px] border-r border-r-[#a9a9a9] flex items-center">Summe=0</div>
        <svg viewBox="0 0 12 12" className="w-3 h-3 ml-[5px] shrink-0"><circle cx="6" cy="6" r="5" fill="#f7f7f7" stroke="#444" /><path d="M3 6h6" stroke="#444" /></svg>
        <div className="ml-[5px] w-[107px] h-[12px] shrink-0 flex items-center">
          <div className="w-[40px] h-[3px] bg-[#bbb] border-y border-[#888]" />
          <div className="w-[12px] h-[12px] rounded-full bg-[#9db9e4] border border-[#667] shrink-0" />
          <div className="w-[3px] h-[3px] bg-[#bbb] border-y border-[#888]" />
          <div className="w-px h-[12px] bg-[#777] shrink-0" />
          <div className="flex-1 h-[3px] bg-[#bbb] border-y border-[#888]" />
        </div>
        <svg viewBox="0 0 12 12" className="w-3 h-3 ml-[5px] shrink-0"><circle cx="6" cy="6" r="5" fill="#f7f7f7" stroke="#444" /><path d="M3 6h6M6 3v6" stroke="#444" /></svg>
        <div className="w-px h-[16px] bg-[#a9a9a9] ml-[6px]" />
        <span className="ml-[4px] pt-[2px]">92 %</span>
      </div>
      {/* Taskbar */}
      <div className="h-[48px] shrink-0 flex items-center bg-[#13293d] text-white">
        <div className="ml-[21px] w-[23px] h-[23px] shrink-0 grid grid-cols-2 gap-[1px]">
          <div className="bg-[#57d0f7]" /><div className="bg-[#3ab4f2]" /><div className="bg-[#2ea6f0]" /><div className="bg-[#1a8fe8]" />
        </div>
        <div className="ml-[14px] w-[218px] h-[30px] shrink-0 rounded-full bg-[#f3f4f6] flex items-center text-[#666] text-[14px]">
          <svg viewBox="0 0 16 16" className="w-4 h-4 ml-[10px] shrink-0"><circle cx="6.500" cy="6.500" r="5" fill="none" stroke="#222" strokeWidth="1.400" /><path d="M10 10l5 5" stroke="#222" strokeWidth="1.600" /></svg>
          <span className="ml-[10px]">Suche</span>
          <svg viewBox="0 0 22 22" className="w-[21px] h-[21px] ml-auto mr-[4px] shrink-0">
            <path d="M11 2a9 9 0 1 0 0 18h8l-1-3a9 9 0 0 0-7-15z" fill="#fff" stroke="#2a9be6" strokeWidth="1.800" />
            <text x="11" y="16" fontSize="13" fontWeight="700" fill="#1673d6" textAnchor="middle" fontFamily={ff}>b</text>
          </svg>
        </div>
        <div className="ml-[3px] flex">
          <Slot>
            <div className="relative w-[24px] h-[22px]">
              <div className="absolute right-0 top-0 w-[17px] h-[16px] bg-gradient-to-br from-white to-[#cfcfcf] rounded-[1px]" />
              <div className="absolute left-0 bottom-0 w-[17px] h-[16px] bg-[#7b7b7b]/80 rounded-[1px]" />
            </div>
          </Slot>
          <Slot>
            <svg viewBox="0 0 24 22" className="w-6 h-[22px] mt-[4px]">
              <path d="M12 1l11 20H1z" fill="#f3c20c" />
              <path d="M5 14h11c3 0 3-3 1-3M7 17h8c3 0 3 2 1 3M9 11h5" fill="none" stroke="#4a3a00" />
            </svg>
            <div className="absolute top-[6px] left-[19px] w-[24px] h-[15px] rounded-full bg-[#2a2a2a] text-[11px] leading-[15px] text-center">14°</div>
          </Slot>
          <Slot>
            <svg viewBox="0 0 24 24" className="w-6 h-6">
              <path d="M12 1a11 11 0 1 1-5 21l-5 1 1-5A11 11 0 0 1 12 1z" fill="#6a63c9" />
              <rect x="6.500" y="8" width="8" height="8" rx="1.500" fill="#fff" />
              <path d="M15.500 11l3.500-2.500v7L15.500 13z" fill="#fff" />
            </svg>
          </Slot>
          <Slot>
            <div className="w-6 h-6 rounded-[5px] bg-[#e0343c] flex items-center justify-center">
              <svg viewBox="0 0 18 18" className="w-[18px] h-[18px]"><circle cx="9" cy="9" r="8" fill="#fff" /><path d="M4.500 6.500l4.500 7 4.500-7c-2-1-3 .500-2.800 1.500L9 10.500 7.300 8c.2-1-.8-2.500-2.800-1.500z" fill="#e0343c" /></svg>
            </div>
          </Slot>
          <Slot dot>
            <svg viewBox="0 0 24 22" className="w-6 h-[22px]">
              <path d="M0 2h9l2 3h13v17H0z" fill="#e2a41d" />
              <path d="M0 6h24v16H0z" fill="#fbd45a" />
              <rect x="5" y="14" width="14" height="8" rx="1" fill="#1a78c8" />
            </svg>
          </Slot>
          <Slot>
            <svg viewBox="0 0 24 24" className="w-6 h-6">
              <circle cx="12" cy="12" r="12" fill="#34a853" />
              <path d="M12 0a12 12 0 0 1 10.400 6H12a6 6 0 0 0-5.200 3L3 2.900A12 12 0 0 1 12 0z" fill="#ea4335" />
              <path d="M22.400 6A12 12 0 0 1 11 24l5-9a6 6 0 0 0 0-9z" fill="#fbbc05" />
              <circle cx="12" cy="12" r="5.500" fill="#fff" />
              <circle cx="12" cy="12" r="4.200" fill="#4285f4" />
            </svg>
          </Slot>
          <Slot dot>
            <svg viewBox="0 0 24 24" className="w-6 h-6">
              <circle cx="12" cy="12" r="11" fill="none" stroke="#d3163f" strokeWidth="1.500" />
              <ellipse cx="12" cy="12" rx="5.500" ry="9.500" fill="none" stroke="#d3163f" strokeWidth="1.500" />
            </svg>
          </Slot>
          <Slot dot>
            <svg viewBox="0 0 24 24" className="w-6 h-6">
              <circle cx="12" cy="12" r="12" fill="#1b7fd0" />
              <path d="M1 10C3 2 12-2 19 2c4 3 6 8 4 12-2 3-7 3-8 1 2-1 2-4 0-6-4-3-11-2-14 1z" fill="#4cd0a2" />
              <path d="M9 14c0 4 4 7 8 7-4 3-9 3-12 0-3-3-3-9 1-12 2 0 3 2 3 5z" fill="#0c4f9a" />
            </svg>
          </Slot>
          <Slot dot>
            <div className="w-6 h-6 rounded-[5px] bg-[#1c1c1c] flex items-center justify-center font-['Liberation_Sans',sans-serif] font-bold italic text-[12px] tracking-[-1px]">GG</div>
          </Slot>
          <Slot dot>
            <svg viewBox="0 0 24 24" className="w-6 h-6">
              <path d="M12 0c2 5 11 8 11 14 0 4-6 5-9 2 0 3 1 5 3 7H7c2-2 3-4 3-7-3 3-9 2-9-2C1 8 10 5 12 0z" fill="#d8101c" />
              <path d="M12 7l1.300 3h3.200l-2.500 2 1 3.200-3-2-3 2 1-3.200-2.500-2h3.200z" fill="#fff" />
            </svg>
          </Slot>
          <div className="relative w-[44px] h-[48px] shrink-0 flex items-center justify-center">
            <div className="absolute left-[2px] top-[4px] w-[40px] h-[40px] rounded-[5px] bg-[#1f3a50]" />
            <Calc className="relative w-[26px] h-[26px]" />
            <div className="absolute left-[14px] bottom-[5px] w-[16px] h-[3px] rounded-full bg-[#4fb8f0]" />
          </div>
          <Slot dot>
            <div className="w-[18px] h-[24px] bg-[#7a8894] p-[2px] flex flex-col gap-[1px]">
              <div className="h-[5px] bg-[#4fc3ee]" />
              <div className="flex-1 grid grid-cols-3 gap-[1px]">
                <div className="bg-[#dfe5ea]" /><div className="bg-[#dfe5ea]" /><div className="bg-[#dfe5ea]" />
                <div className="bg-[#dfe5ea]" /><div className="bg-[#dfe5ea]" /><div className="bg-[#1f4e8a]" />
                <div className="bg-[#dfe5ea]" /><div className="bg-[#dfe5ea]" /><div className="bg-[#1f4e8a]" />
              </div>
            </div>
          </Slot>
        </div>
        <svg viewBox="0 0 12 8" className="w-3 h-2 ml-[550px] shrink-0"><path d="M1 7l5-5 5 5" fill="none" stroke="#fff" strokeWidth="1.500" /></svg>
        <svg viewBox="0 0 18 18" className="w-[18px] h-[18px] ml-[16px] shrink-0">
          <path d="M1 11a4 4 0 0 1 4-4 5 5 0 0 1 9 2v4H4a3 3 0 0 1-3-2z" fill="#bdbdbd" />
          <circle cx="13" cy="13" r="4.500" fill="#d0202a" />
          <path d="M11 11l4 4m0-4l-4 4" stroke="#fff" />
        </svg>
        <svg viewBox="0 0 16 14" className="w-4 h-[14px] ml-[16px] shrink-0"><path d="M1 5c4-4 10-4 14 0M3.500 7.500c3-2.500 6-2.500 9 0M6 10c1.500-1 2.500-1 4 0" fill="none" stroke="#fff" strokeWidth="1.200" /><circle cx="8" cy="12.500" r="1.200" fill="#fff" /></svg>
        <svg viewBox="0 0 16 14" className="w-4 h-[14px] ml-[8px] shrink-0"><path d="M1 5h3l4-3.500v11L4 9H1z" fill="none" stroke="#fff" /><path d="M10.500 4.500c1 1.500 1 3.500 0 5M13 3c1.500 2.500 1.500 5.500 0 8" fill="none" stroke="#9aa8b4" /></svg>
        <svg viewBox="0 0 16 14" className="w-4 h-[14px] ml-[8px] shrink-0"><rect x="1" y="4" width="13" height="8" rx="1" fill="#fff" stroke="#fff" /><rect x="14" y="6.500" width="2" height="3" fill="#fff" /><path d="M4 0L2 5h2l-1 3" fill="none" stroke="#13293d" strokeWidth="1.500" /><path d="M4 0L2 5h2l-1 3" fill="none" stroke="#fff" /></svg>
        <div className="ml-[14px] w-[60px] shrink-0 flex flex-col items-end pt-px text-[12px] leading-[16px] font-['Noto_Sans',sans-serif]">
          <span>13:10</span>
          <span>06.08.2023</span>
        </div>
        <div className="ml-[7px] w-4 h-4 rounded-full bg-[#4db8f0] text-[#13293d] text-[10px] font-semibold flex items-center justify-center shrink-0">4</div>
      </div>
    </div>
  );
}
